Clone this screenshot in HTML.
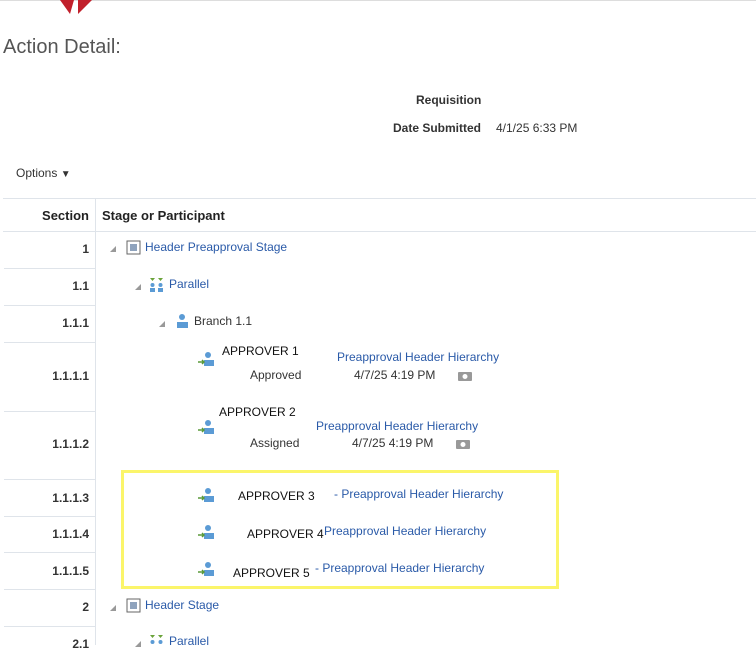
<!DOCTYPE html><html><head><style>
body{margin:0;width:756px;height:645px;overflow:hidden;background:#fff;font-family:"Liberation Sans",sans-serif;font-size:12px;color:#333;position:relative}
.a{position:absolute;white-space:nowrap}
.l{color:#2a5aa8}
.b{font-weight:bold}
.sec{position:absolute;left:0;width:89px;text-align:right;font-weight:bold;color:#333}
.hl{position:absolute;left:4px;width:91px;height:1px;background:#dfe4ea}
.tri{position:absolute;width:0;height:0;border-left:6px solid transparent;border-bottom:6px solid #999}
.pi{position:absolute;width:16px;height:16px}
.ap{font-family:"Liberation Sans",sans-serif;color:#111;font-size:12px}
</style></head><body>
<div class="a" style="left:0;top:0;width:756px;height:1px;background:#ddd"></div>
<svg class="a" style="left:48px;top:0" width="50" height="20"><path d="M12 0 L22 14 L26 0Z M30 0 L30 14 L44 0Z" fill="#c1202b"/></svg>
<div class="a" style="left:3px;top:36px;font-size:20px;color:#555">Action Detail:</div>
<div class="a b" style="left:416px;top:93px">Requisition</div>
<div class="a b" style="left:393px;top:121px">Date Submitted</div>
<div class="a" style="left:496px;top:121px">4/1/25 6:33 PM</div>
<div class="a" style="left:16px;top:166px">Options <span style="font-size:10px">▼</span></div>
<div class="a" style="left:3px;top:198px;width:753px;height:1px;background:#dfe4ea"></div>
<div class="a" style="left:95px;top:198px;width:1px;height:447px;background:#dfe4ea"></div>
<div class="a" style="left:3px;top:231px;width:753px;height:1px;background:#dfe4ea"></div>
<div class="sec" style="top:208px;font-size:13px;color:#222">Section</div>
<div class="a b" style="left:102px;top:208px;font-size:13px;color:#222">Stage or Participant</div>
<div class="hl" style="top:268px"></div><div class="hl" style="top:305px"></div><div class="hl" style="top:342px"></div><div class="hl" style="top:411px"></div><div class="hl" style="top:479px"></div><div class="hl" style="top:516px"></div><div class="hl" style="top:552px"></div><div class="hl" style="top:589px"></div><div class="hl" style="top:626px"></div>
<div class="sec" style="top:242px">1</div>
<div class="sec" style="top:279px">1.1</div>
<div class="sec" style="top:316px">1.1.1</div>
<div class="sec" style="top:369px">1.1.1.1</div>
<div class="sec" style="top:437px">1.1.1.2</div>
<div class="sec" style="top:491px">1.1.1.3</div>
<div class="sec" style="top:527px">1.1.1.4</div>
<div class="sec" style="top:564px">1.1.1.5</div>
<div class="sec" style="top:600px">2</div>
<div class="sec" style="top:637px">2.1</div>
<div class="tri" style="left:110px;top:246px"></div>
<svg class="pi" style="left:126px;top:240px"><rect x="1" y="1" width="13" height="13" fill="#fff" stroke="#666"/><rect x="4" y="4" width="7" height="7" fill="#8fa3bd"/></svg>
<div class="a l" style="left:145px;top:240px">Header Preapproval Stage</div>
<div class="tri" style="left:135px;top:284px"></div>
<svg class="pi" style="left:149px;top:277px"><path d="M1 1h5l-2.5 3z M9 1h5l-2.5 3z" fill="#6aa33a"/><circle cx="3.5" cy="8" r="2" fill="#5b9bd5"/><circle cx="11.5" cy="8" r="2" fill="#5b9bd5"/><rect x="1" y="11" width="5" height="4" fill="#5b9bd5"/><rect x="9" y="11" width="5" height="4" fill="#5b9bd5"/></svg>
<div class="a l" style="left:169px;top:277px">Parallel</div>
<div class="tri" style="left:159px;top:321px"></div>
<svg class="pi" style="left:175px;top:313px"><circle cx="7" cy="4" r="3" fill="#5b9bd5"/><rect x="2" y="9" width="11" height="6" fill="#5b9bd5"/></svg>
<div class="a" style="left:194px;top:314px">Branch 1.1</div>
<svg class="pi" style="left:198px;top:351px"><circle cx="10" cy="4" r="3" fill="#5b9bd5"/><rect x="6" y="9" width="10" height="6" fill="#5b9bd5"/><path d="M0 11h6M4 9l2 2-2 2" stroke="#5a9a3a" stroke-width="1.5" fill="none"/></svg>
<div class="a ap" style="left:222px;top:344px">APPROVER 1</div>
<div class="a l" style="left:337px;top:350px">Preapproval Header Hierarchy</div>
<div class="a" style="left:250px;top:368px">Approved</div>
<div class="a" style="left:354px;top:368px">4/7/25 4:19 PM</div>
<svg class="a" style="left:458px;top:370px" width="14" height="11"><rect x="0" y="2" width="14" height="9" rx="1" fill="#999"/><circle cx="7" cy="6.5" r="2.5" fill="#fff"/></svg>
<svg class="pi" style="left:198px;top:419px"><circle cx="10" cy="4" r="3" fill="#5b9bd5"/><rect x="6" y="9" width="10" height="6" fill="#5b9bd5"/><path d="M0 11h6M4 9l2 2-2 2" stroke="#5a9a3a" stroke-width="1.5" fill="none"/></svg>
<div class="a ap" style="left:219px;top:405px">APPROVER 2</div>
<div class="a l" style="left:316px;top:419px">Preapproval Header Hierarchy</div>
<div class="a" style="left:250px;top:436px">Assigned</div>
<div class="a" style="left:352px;top:436px">4/7/25 4:19 PM</div>
<svg class="a" style="left:456px;top:438px" width="14" height="11"><rect x="0" y="2" width="14" height="9" rx="1" fill="#999"/><circle cx="7" cy="6.5" r="2.5" fill="#fff"/></svg>
<div class="a" style="left:121px;top:470px;width:432px;height:113px;border:3px solid #fbf56a"></div>
<svg class="pi" style="left:198px;top:487px"><circle cx="10" cy="4" r="3" fill="#5b9bd5"/><rect x="6" y="9" width="10" height="6" fill="#5b9bd5"/><path d="M0 11h6M4 9l2 2-2 2" stroke="#5a9a3a" stroke-width="1.5" fill="none"/></svg>
<div class="a ap" style="left:238px;top:489px">APPROVER 3</div>
<div class="a l" style="left:334px;top:487px">- Preapproval Header Hierarchy</div>
<svg class="pi" style="left:198px;top:524px"><circle cx="10" cy="4" r="3" fill="#5b9bd5"/><rect x="6" y="9" width="10" height="6" fill="#5b9bd5"/><path d="M0 11h6M4 9l2 2-2 2" stroke="#5a9a3a" stroke-width="1.5" fill="none"/></svg>
<div class="a ap" style="left:247px;top:527px">APPROVER 4</div>
<div class="a l" style="left:324px;top:524px">Preapproval Header Hierarchy</div>
<svg class="pi" style="left:198px;top:561px"><circle cx="10" cy="4" r="3" fill="#5b9bd5"/><rect x="6" y="9" width="10" height="6" fill="#5b9bd5"/><path d="M0 11h6M4 9l2 2-2 2" stroke="#5a9a3a" stroke-width="1.5" fill="none"/></svg>
<div class="a ap" style="left:233px;top:566px">APPROVER 5</div>
<div class="a l" style="left:315px;top:561px">- Preapproval Header Hierarchy</div>
<div class="tri" style="left:110px;top:605px"></div>
<svg class="pi" style="left:126px;top:598px"><rect x="1" y="1" width="13" height="13" fill="#fff" stroke="#666"/><rect x="4" y="4" width="7" height="7" fill="#8fa3bd"/></svg>
<div class="a l" style="left:145px;top:598px">Header Stage</div>
<div class="tri" style="left:135px;top:641px"></div>
<svg class="pi" style="left:149px;top:634px"><path d="M1 1h5l-2.5 3z M9 1h5l-2.5 3z" fill="#6aa33a"/><circle cx="3.5" cy="8" r="2" fill="#5b9bd5"/><circle cx="11.5" cy="8" r="2" fill="#5b9bd5"/></svg>
<div class="a l" style="left:169px;top:634px">Parallel</div>
</body></html>
